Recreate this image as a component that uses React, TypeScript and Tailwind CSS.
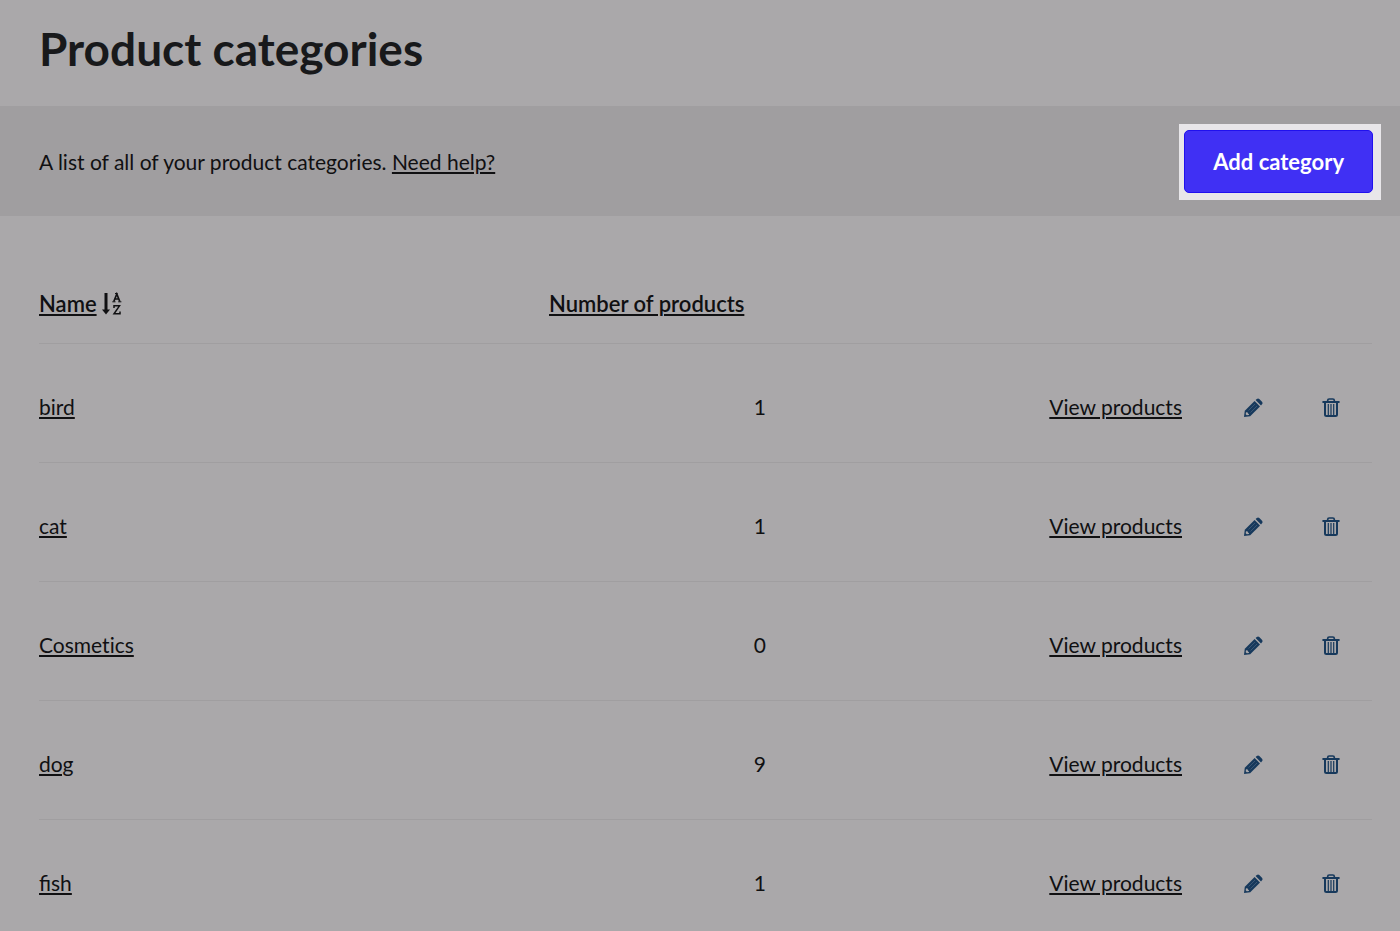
import React from 'react';

const categories = [
  { name: 'bird', count: 1 },
  { name: 'cat', count: 1 },
  { name: 'Cosmetics', count: 0, plain: true },
  { name: 'dog', count: 9 },
  { name: 'fish', count: 1 },
];

const link = 'underline decoration-2 underline-offset-2';

function SortIcon() {
  return (
    <svg width="20" height="24" viewBox="0 0 20 24" fill="none" stroke="#101012" aria-hidden="true">
      <path d="M4 1v18" strokeWidth="3" />
      <path d="M0 17.500h8l-4 5z" fill="#101012" stroke="none" />
      <path d="M11.800 9.500 14.800 2l3 7.500M12.800 7h4" strokeWidth="1.700" />
      <path d="M10.300 9.800h3.200M16.200 9.800h3.200M13 1.500h2.600" strokeWidth="1" />
      <path d="M12 16v-2.200h5.500l-5.500 8h6v-2.200" strokeWidth="1.500" />
    </svg>
  );
}

function PencilIcon() {
  return (
    <svg width="20" height="20" viewBox="0 0 20 20" aria-hidden="true">
      <path d="M1 19l.800-6.200L11.600 3l5.400 5.400L7.200 18.200z" fill="#17395c" />
      <path d="M12.600 2l1.200-1a1.900 1.900 0 0 1 2.500 0L19 3.700a1.900 1.900 0 0 1 0 2.500L18 7.400z" fill="#17395c" />
      <path d="M3 14.200l-.300 2 1.100 1.100 2-.300.300-.900-1-.300-.400-1.300z" fill="#aaa8aa" />
      <path d="M5.500 12.500l6.500-6.500M7.500 14.500L14 8" stroke="#60758c" strokeWidth=".5" />
    </svg>
  );
}

function TrashIcon() {
  return (
    <svg width="18" height="20" viewBox="0 0 18 20" fill="none" stroke="#17395c" aria-hidden="true">
      <path d="M1.200 4h15.600" strokeWidth="2" strokeLinecap="round" />
      <path d="M5.700 4V2.500A1.500 1.500 0 0 1 7.200 1h3.600a1.500 1.500 0 0 1 1.500 1.500V4" strokeWidth="1.700" />
      <path d="M3 5v11.500A1.500 1.500 0 0 0 4.500 18h9a1.500 1.500 0 0 0 1.500-1.500V5" strokeWidth="2" />
      <path d="M6.300 6v11M9 6v11M11.700 6v11" strokeWidth="1.200" />
    </svg>
  );
}

export default function App() {
  return (
    <main className="min-h-screen overflow-hidden bg-[#aaa8aa] font-['Lato',sans-serif] text-[21px] leading-8 text-[#101012]">
      <header className="px-[39px] pt-[19px] pb-[27px]">
        <h1 className="text-[46px] leading-[60px] font-bold text-[#18191b]">Product categories</h1>
      </header>
      <section className="flex items-center justify-between bg-[#a09ea0] pt-[18px] pr-[19px] pb-4 pl-[39px]">
        <p>
          A list of all of your product categories. <a href="#help" className={link}>Need help?</a>
        </p>
        <div className="bg-[#e8e6e9] pt-1.5 pr-2 pb-[7px] pl-[5px]">
          <button className="block h-[63px] rounded-[5px] border border-[#2010ee] bg-[#4030f4] px-7 text-[22px] font-bold text-white">Add category</button>
        </div>
      </section>
      <div className="pt-12 pr-7 pl-[39px]">
        <table className="w-full table-fixed border-collapse">
          <thead>
            <tr className="h-[79px] border-b border-[#a09ea0] text-left text-[22px]">
              <th className="w-[510px] pt-0.5 font-semibold">
                <span className="flex items-center gap-[5px]"><a href="#name" className={link}>Name</a><SortIcon /></span>
              </th>
              <th className="w-[217px] pt-0.5 font-semibold"><a href="#number" className={link}>Number of products</a></th>
              <th aria-label="Products" />
              <th className="w-[74px]" aria-label="Edit" />
              <th className="w-[82px]" aria-label="Delete" />
            </tr>
          </thead>
          <tbody>
            {categories.map((c) => (
              <tr key={c.name} className="h-[119px] border-b border-[#a09ea0]">
                <td className="pt-2"><a href="#category" className={c.plain ? `${link} [font-variant-ligatures:none]` : link}>{c.name}</a></td>
                <td className="pt-2 text-right">{c.count}</td>
                <td className="pt-2 pr-[34px] text-right"><a href="#products" className={link}>View products</a></td>
                <td className="pt-2.5"><button aria-label={`Edit ${c.name}`} className="mx-auto block"><PencilIcon /></button></td>
                <td className="pt-2.5"><button aria-label={`Delete ${c.name}`} className="mx-auto block"><TrashIcon /></button></td>
              </tr>
            ))}
          </tbody>
        </table>
      </div>
    </main>
  );
}
